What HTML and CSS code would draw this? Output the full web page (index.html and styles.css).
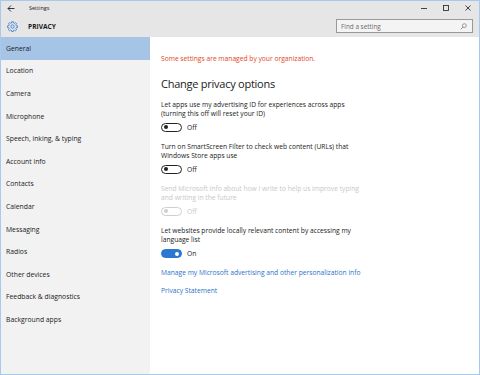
FILE: index.html
```html
<!DOCTYPE html>
<html>
<head>
<meta charset="utf-8">
<link rel="stylesheet" href="styles.css">
</head>
<body>
<div class="window">
  <div class="titlebar">
    <svg class="back" width="8" height="7" viewBox="0 0 8 7"><path d="M4 0.5 L1 3.5 L4 6.5 M1 3.5 H7.5" fill="none" stroke="#222" stroke-width="0.9"/></svg>
    <span class="title">Settings</span>
    <div class="controls">
      <svg width="22" height="14" viewBox="0 0 22 14"><path d="M8 7.5 H14" stroke="#333" stroke-width="0.9"/></svg>
      <svg width="22" height="14" viewBox="0 0 22 14"><rect x="8.5" y="4.5" width="5" height="5" fill="none" stroke="#333" stroke-width="0.9"/></svg>
      <svg width="22" height="14" viewBox="0 0 22 14"><path d="M8.5 4.5 L13.5 9.5 M13.5 4.5 L8.5 9.5" stroke="#333" stroke-width="0.9"/></svg>
    </div>
  </div>
  <div class="header">
    <div class="brand">
      <svg class="gear" width="11" height="11" viewBox="0 0 24 24"><path d="M10.3 1.5h3.4l.5 2.9 1.9.8 2.4-1.7 2.4 2.4-1.7 2.4.8 1.9 2.9.5v3.4l-2.9.5-.8 1.9 1.700 2.4-2.4 2.4-2.4-1.7-1.9.8-.5 2.9h-3.4l-.5-2.9-1.9-.8-2.4 1.7-2.4-2.4 1.7-2.4-.8-1.9-2.9-.5v-3.4l2.9-.5.8-1.9-1.7-2.4 2.4-2.4 2.4 1.7 1.9-.8z" fill="none" stroke="#2f7bd1" stroke-width="1.8" stroke-linejoin="round"/><circle cx="12" cy="12" r="3.6" fill="none" stroke="#2f7bd1" stroke-width="1.8"/></svg>
      <span class="section">PRIVACY</span>
    </div>
    <div class="search">
      <span class="placeholder">Find a setting</span>
      <svg width="7" height="7" viewBox="0 0 8 8"><circle cx="5" cy="3" r="2.2" fill="none" stroke="#777" stroke-width="0.8"/><path d="M3.4 4.6 L0.8 7.2" stroke="#777" stroke-width="0.9"/></svg>
    </div>
  </div>
  <div class="main">
    <nav class="sidebar">
      <div class="nav-item active">General</div>
      <div class="nav-item">Location</div>
      <div class="nav-item">Camera</div>
      <div class="nav-item">Microphone</div>
      <div class="nav-item">Speech, inking, &amp; typing</div>
      <div class="nav-item">Account info</div>
      <div class="nav-item">Contacts</div>
      <div class="nav-item">Calendar</div>
      <div class="nav-item">Messaging</div>
      <div class="nav-item">Radios</div>
      <div class="nav-item">Other devices</div>
      <div class="nav-item">Feedback &amp; diagnostics</div>
      <div class="nav-item">Background apps</div>
    </nav>
    <section class="content">
      <p class="warning">Some settings are managed by your organization.</p>
      <h1 class="heading">Change privacy options</h1>

      <div class="setting">
        <p class="desc">Let apps use my advertising ID for experiences across apps<br>(turning this off will reset your ID)</p>
        <div class="toggle-row"><span class="toggle off"><span class="knob"></span></span><span class="state">Off</span></div>
      </div>

      <div class="setting">
        <p class="desc">Turn on SmartScreen Filter to check web content (URLs) that<br>Windows Store apps use</p>
        <div class="toggle-row"><span class="toggle off"><span class="knob"></span></span><span class="state">Off</span></div>
      </div>

      <div class="setting disabled">
        <p class="desc">Send Microsoft info about how I write to help us improve typing<br>and writing in the future</p>
        <div class="toggle-row"><span class="toggle off"><span class="knob"></span></span><span class="state">Off</span></div>
      </div>

      <div class="setting">
        <p class="desc">Let websites provide locally relevant content by accessing my<br>language list</p>
        <div class="toggle-row"><span class="toggle on"><span class="knob"></span></span><span class="state">On</span></div>
      </div>

      <a class="link">Manage my Microsoft advertising and other personalization info</a>
      <a class="link">Privacy Statement</a>
    </section>
  </div>
</div>
</body>
</html>
```

FILE: styles.css
```css
* { box-sizing: border-box; }
html, body { margin: 0; padding: 0; }
body {
  width: 480px;
  height: 375px;
  overflow: hidden;
  font-family: "Open Sans", "Noto Sans", sans-serif;
  color: #1a1a1a;
  background: #fff;
}
.window {
  width: 480px;
  height: 375px;
  border: 1px solid #a9c8ea;
  display: flex;
  flex-direction: column;
  background: #e6e6e6;
}
.titlebar {
  height: 14px;
  display: flex;
  align-items: center;
  padding-left: 6px;
}
.title {
  font-size: 5.5px;
  margin-left: 14px;
  color: #222;
}
.controls {
  margin-left: auto;
  display: flex;
}
.controls svg { display: block; }
.header {
  height: 22px;
  display: flex;
  align-items: center;
  justify-content: space-between;
}
.brand {
  display: flex;
  align-items: center;
  padding-left: 6px;
}
.gear { display: block; }
.section {
  font-size: 6.6px;
  font-weight: 700;
  margin-left: 10px;
  color: #1a1a1a;
}
.search {
  width: 137px;
  height: 14px;
  margin-right: 6px;
  border: 1px solid #999;
  background: #f4f4f4;
  display: flex;
  align-items: center;
  justify-content: space-between;
  padding: 0 5px 0 4px;
}
.placeholder {
  font-size: 6.4px;
  color: #6a6a6a;
}
.main {
  flex: 1;
  display: flex;
  min-height: 0;
}
.sidebar {
  width: 149px;
  background: #f2f2f2;
  display: flex;
  flex-direction: column;
}
.nav-item {
  height: 22.6px;
  display: flex;
  align-items: center;
  padding-left: 5px;
  font-size: 6.8px;
  color: #1a1a1a;
}
.nav-item.active {
  background: #a6c4e6;
}
.content {
  flex: 1;
  background: #fff;
  padding: 17px 0 0 11px;
  display: flex;
  flex-direction: column;
  align-items: flex-start;
}
p { margin: 0; }
.warning {
  font-size: 6.7px;
  line-height: 9px;
  color: #e2461c;
}
.heading {
  margin: 12.5px 0 0 0;
  font-size: 11px;
  letter-spacing: -0.25px;
  line-height: 16px;
  font-weight: 400;
  color: #1a1a1a;
}
.setting {
  display: flex;
  flex-direction: column;
  margin-top: 8.5px;
}
.setting + .setting { margin-top: 9.3px; }
.desc {
  font-size: 6.7px;
  line-height: 9px;
  color: #1a1a1a;
}
.toggle-row {
  display: flex;
  align-items: center;
  height: 11px;
  margin-top: 3.8px;
}
.toggle {
  width: 21px;
  height: 9.5px;
  border-radius: 5px;
  border: 1.2px solid #222;
  display: flex;
  align-items: center;
  padding: 0 1.6px;
}
.knob {
  width: 4px;
  height: 4px;
  border-radius: 50%;
  background: #222;
}
.toggle.on {
  background: #2b77d1;
  border-color: #2b77d1;
  justify-content: flex-end;
}
.toggle.on .knob { background: #fff; }
.state {
  font-size: 6.7px;
  margin-left: 5px;
  color: #1a1a1a;
}
.disabled .desc, .disabled .state { color: #c8c8c8; }
.disabled .toggle { border-color: #cfcfcf; }
.disabled .knob { background: #cfcfcf; }
.link {
  font-size: 6.7px;
  line-height: 9px;
  color: #2b73c9;
  margin-top: 9px;
}
.link + .link { margin-top: 9.4px; }
```
